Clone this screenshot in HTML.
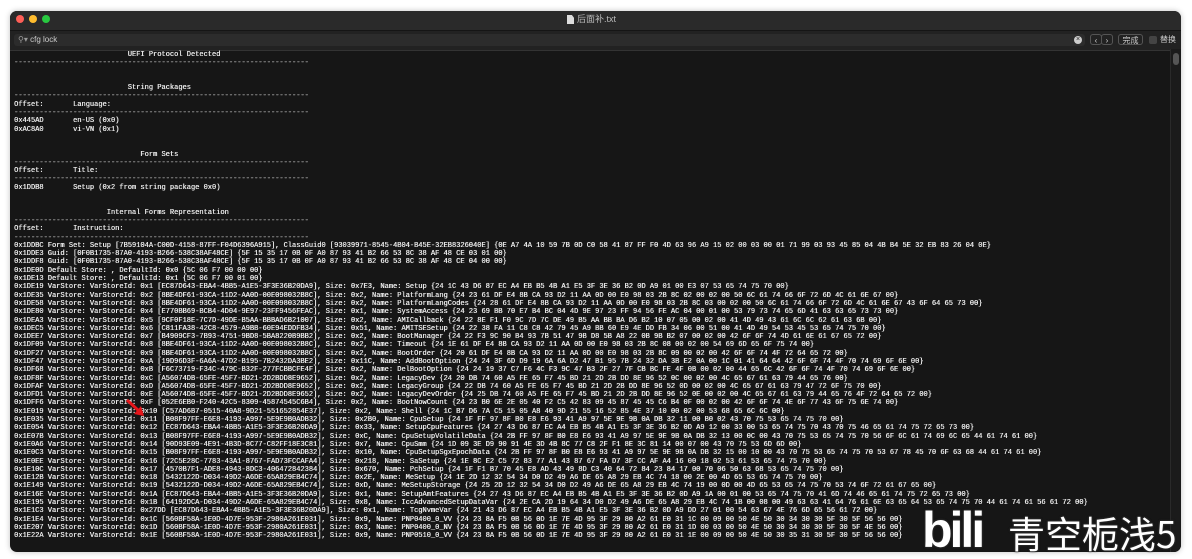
<!DOCTYPE html>
<html><head><meta charset="utf-8"><style>
html,body{margin:0;padding:0;width:1192px;height:559px;background:#fff;overflow:hidden;position:relative;font-family:"Liberation Sans","Noto Sans CJK SC",sans-serif}
.win{position:absolute;left:10px;top:11px;width:1171px;height:541px;background:#161616;border-radius:7px;overflow:hidden;box-shadow:0 0 6px rgba(0,0,0,.25)}
.tb{position:absolute;left:0;top:0;width:100%;height:19px;background:#2a2a2a}
.dot{position:absolute;top:4px;width:8px;height:8px;border-radius:50%}
.sb{position:absolute;left:0;top:19px;width:100%;height:19px;background:#222;border-top:1px solid #151515;border-bottom:1px solid #333}
.field{position:absolute;left:4px;top:3px;width:1071px;height:12px;background:#2c2c2c;border-radius:3px;color:#ccc;font-size:8px;line-height:12px}
.btn{position:absolute;top:3px;height:11px;border:1px solid #555;border-radius:3px;color:#ccc;font-size:8px;line-height:11px;text-align:center;box-sizing:border-box}
pre{position:absolute;left:4px;top:40px;margin:0;font-family:"Liberation Mono",monospace;font-size:7.03px;line-height:8.29px;color:#e8e8e8;white-space:pre;text-shadow:0.3px 0 0 #e8e8e8}
.d{color:#bbb}
.scr{position:absolute;left:1160px;top:38px;width:11px;height:503px;background:#1b1b1b;border-left:1px solid #2a2a2a}
.wm{position:absolute;color:#fff;text-shadow:0 0 2px #333,0 0 2px #333}
</style></head><body>
<div class="win">
 <div class="tb">
  <div class="dot" style="left:6px;background:#fe5f57"></div>
  <div class="dot" style="left:19px;background:#febc2e"></div>
  <div class="dot" style="left:32px;background:#28c840"></div>
  <div style="position:absolute;left:557px;top:4px;width:7px;height:9px;background:#ddd;clip-path:polygon(0 0,70% 0,100% 30%,100% 100%,0 100%)"></div>
  <div style="position:absolute;left:567px;top:2px;color:#bbb;font-size:9px;line-height:13px">后面补.txt</div>
 </div>
 <div class="sb">
  <div class="field"><span style="margin-left:4px;color:#999">⚲▾</span> <span>cfg lock</span>
   <div style="position:absolute;right:3px;top:2px;width:8px;height:8px;border-radius:50%;background:#ccc;color:#222;font-size:7px;line-height:8px;text-align:center">×</div></div>
  <div class="btn" style="left:1080px;width:12px">‹</div>
  <div class="btn" style="left:1091px;width:12px">›</div>
  <div class="btn" style="left:1108px;width:25px">完成</div>
  <div style="position:absolute;left:1139px;top:5px;width:8px;height:8px;background:#444;border-radius:2px"></div>
  <div style="position:absolute;left:1150px;top:3px;color:#ccc;font-size:8px;line-height:12px">替换</div>
 </div>
<pre>                           UEFI Protocol Detected
<span class="d">----------------------------------------------------------------------</span>


                           String Packages
<span class="d">----------------------------------------------------------------------</span>
Offset:       Language:
<span class="d">----------------------------------------------------------------------</span>
0x445AD       en-US (0x0)
0xAC8A0       vi-VN (0x1)


                              Form Sets
<span class="d">----------------------------------------------------------------------</span>
Offset:       Title:
<span class="d">----------------------------------------------------------------------</span>
0x1DDB8       Setup (0x2 from string package 0x0)


                      Internal Forms Representation
<span class="d">----------------------------------------------------------------------</span>
Offset:       Instruction:
<span class="d">----------------------------------------------------------------------</span>
0x1DDBC Form Set: Setup [7B59104A-C00D-4158-87FF-F04D6396A915], ClassGuid0 [93039971-8545-4B04-B45E-32EB8326040E] {0E A7 4A 10 59 7B 0D C0 58 41 87 FF F0 4D 63 96 A9 15 02 00 03 00 01 71 99 03 93 45 85 04 4B B4 5E 32 EB 83 26 04 0E}
0x1DDE3 Guid: [0F0B1735-87A0-4193-B266-538C38AF48CE] {5F 15 35 17 0B 0F A0 87 93 41 B2 66 53 8C 38 AF 48 CE 03 01 00}
0x1DDF8 Guid: [0F0B1735-87A0-4193-B266-538C38AF48CE] {5F 15 35 17 0B 0F A0 87 93 41 B2 66 53 8C 38 AF 48 CE 04 00 00}
0x1DE0D Default Store: , DefaultId: 0x0 {5C 06 F7 00 00 00}
0x1DE13 Default Store: , DefaultId: 0x1 {5C 06 F7 00 01 00}
0x1DE19 VarStore: VarStoreId: 0x1 [EC87D643-EBA4-4BB5-A1E5-3F3E36B20DA9], Size: 0x7E3, Name: Setup {24 1C 43 D6 87 EC A4 EB B5 4B A1 E5 3F 3E 36 B2 0D A9 01 00 E3 07 53 65 74 75 70 00}
0x1DE35 VarStore: VarStoreId: 0x2 [8BE4DF61-93CA-11D2-AA0D-00E098032B8C], Size: 0x2, Name: PlatformLang {24 23 61 DF E4 8B CA 93 D2 11 AA 0D 00 E0 98 03 2B 8C 02 00 02 00 50 6C 61 74 66 6F 72 6D 4C 61 6E 67 00}
0x1DE58 VarStore: VarStoreId: 0x3 [8BE4DF61-93CA-11D2-AA0D-00E098032B8C], Size: 0x2, Name: PlatformLangCodes {24 28 61 DF E4 8B CA 93 D2 11 AA 0D 00 E0 98 03 2B 8C 03 00 02 00 50 6C 61 74 66 6F 72 6D 4C 61 6E 67 43 6F 64 65 73 00}
0x1DE80 VarStore: VarStoreId: 0x4 [E770BB69-BCB4-4D04-9E97-23FF9456FEAC], Size: 0x1, Name: SystemAccess {24 23 69 BB 70 E7 B4 BC 04 4D 9E 97 23 FF 94 56 FE AC 04 00 01 00 53 79 73 74 65 6D 41 63 63 65 73 73 00}
0x1DEA3 VarStore: VarStoreId: 0x5 [9CF0F18E-7C7D-49DE-B5AA-BBBAD6B21007], Size: 0x2, Name: AMICallback {24 22 8E F1 F0 9C 7D 7C DE 49 B5 AA BB BA D6 B2 10 07 05 00 02 00 41 4D 49 43 61 6C 6C 62 61 63 6B 00}
0x1DEC5 VarStore: VarStoreId: 0x6 [C811FA38-42C8-4579-A9BB-60E94EDDFB34], Size: 0x51, Name: AMITSESetup {24 22 38 FA 11 C8 C8 42 79 45 A9 BB 60 E9 4E DD FB 34 06 00 51 00 41 4D 49 54 53 45 53 65 74 75 70 00}
0x1DEE7 VarStore: VarStoreId: 0x7 [B4909CF3-7B93-4751-9BD8-5BA8220B9BB2], Size: 0x2, Name: BootManager {24 22 F3 9C 90 B4 93 7B 51 47 9B D8 5B A8 22 0B 9B B2 07 00 02 00 42 6F 6F 74 4D 61 6E 61 67 65 72 00}
0x1DF09 VarStore: VarStoreId: 0x8 [8BE4DF61-93CA-11D2-AA0D-00E098032B8C], Size: 0x2, Name: Timeout {24 1E 61 DF E4 8B CA 93 D2 11 AA 0D 00 E0 98 03 2B 8C 08 00 02 00 54 69 6D 65 6F 75 74 00}
0x1DF27 VarStore: VarStoreId: 0x9 [8BE4DF61-93CA-11D2-AA0D-00E098032B8C], Size: 0x2, Name: BootOrder {24 20 61 DF E4 8B CA 93 D2 11 AA 0D 00 E0 98 03 2B 8C 09 00 02 00 42 6F 6F 74 4F 72 64 65 72 00}
0x1DF47 VarStore: VarStoreId: 0xA [19D96D3F-6A6A-47D2-B195-7B2432DA3BE2], Size: 0x11C, Name: AddBootOption {24 24 3F 6D D9 19 6A 6A D2 47 B1 95 7B 24 32 DA 3B E2 0A 00 1C 01 41 64 64 42 6F 6F 74 4F 70 74 69 6F 6E 00}
0x1DF68 VarStore: VarStoreId: 0xB [F6C73719-F34C-479C-B32F-277FCBBCFE4F], Size: 0x2, Name: DelBootOption {24 24 19 37 C7 F6 4C F3 9C 47 B3 2F 27 7F CB BC FE 4F 0B 00 02 00 44 65 6C 42 6F 6F 74 4F 70 74 69 6F 6E 00}
0x1DF8F VarStore: VarStoreId: 0xC [A56074DB-65FE-45F7-BD21-2D2BDD8E9652], Size: 0x2, Name: LegacyDev {24 20 DB 74 60 A5 FE 65 F7 45 BD 21 2D 2B DD 8E 96 52 0C 00 02 00 4C 65 67 61 63 79 44 65 76 00}
0x1DFAF VarStore: VarStoreId: 0xD [A56074DB-65FE-45F7-BD21-2D2BDD8E9652], Size: 0x2, Name: LegacyGroup {24 22 DB 74 60 A5 FE 65 F7 45 BD 21 2D 2B DD 8E 96 52 0D 00 02 00 4C 65 67 61 63 79 47 72 6F 75 70 00}
0x1DFD1 VarStore: VarStoreId: 0xE [A56074DB-65FE-45F7-BD21-2D2BDD8E9652], Size: 0x2, Name: LegacyDevOrder {24 25 DB 74 60 A5 FE 65 F7 45 BD 21 2D 2B DD 8E 96 52 0E 00 02 00 4C 65 67 61 63 79 44 65 76 4F 72 64 65 72 00}
0x1DFF6 VarStore: VarStoreId: 0xF [052E6EB0-F240-42C5-8309-45874545C6B4], Size: 0x2, Name: BootNowCount {24 23 B0 6E 2E 05 40 F2 C5 42 83 09 45 87 45 45 C6 B4 0F 00 02 00 42 6F 6F 74 4E 6F 77 43 6F 75 6E 74 00}
0x1E019 VarStore: VarStoreId: 0x10 [C57AD6B7-0515-40A8-9D21-551652854E37], Size: 0x2, Name: Shell {24 1C B7 D6 7A C5 15 05 A8 40 9D 21 55 16 52 85 4E 37 10 00 02 00 53 68 65 6C 6C 00}
0x1E035 VarStore: VarStoreId: 0x11 [B08F97FF-E6E8-4193-A997-5E9E9B0ADB32], Size: 0x2B0, Name: CpuSetup {24 1F FF 97 8F B0 E8 E6 93 41 A9 97 5E 9E 9B 0A DB 32 11 00 B0 02 43 70 75 53 65 74 75 70 00}
0x1E054 VarStore: VarStoreId: 0x12 [EC87D643-EBA4-4BB5-A1E5-3F3E36B20DA9], Size: 0x33, Name: SetupCpuFeatures {24 27 43 D6 87 EC A4 EB B5 4B A1 E5 3F 3E 36 B2 0D A9 12 00 33 00 53 65 74 75 70 43 70 75 46 65 61 74 75 72 65 73 00}
0x1E07B VarStore: VarStoreId: 0x13 [B08F97FF-E6E8-4193-A997-5E9E9B0ADB32], Size: 0xC, Name: CpuSetupVolatileData {24 2B FF 97 8F B0 E8 E6 93 41 A9 97 5E 9E 9B 0A DB 32 13 00 0C 00 43 70 75 53 65 74 75 70 56 6F 6C 61 74 69 6C 65 44 61 74 61 00}
0x1E0A6 VarStore: VarStoreId: 0x14 [90D93E09-4E91-4B3D-8C77-C82FF18E3C81], Size: 0x7, Name: CpuSmm {24 1D 09 3E D9 90 91 4E 3D 4B 8C 77 C8 2F F1 8E 3C 81 14 00 07 00 43 70 75 53 6D 6D 00}
0x1E0C3 VarStore: VarStoreId: 0x15 [B08F97FF-E6E8-4193-A997-5E9E9B0ADB32], Size: 0x10, Name: CpuSetupSgxEpochData {24 2B FF 97 8F B0 E8 E6 93 41 A9 97 5E 9E 9B 0A DB 32 15 00 10 00 43 70 75 53 65 74 75 70 53 67 78 45 70 6F 63 68 44 61 74 61 00}
0x1E0EE VarStore: VarStoreId: 0x16 [72C5E28C-7783-43A1-8767-FAD73FCCAFA4], Size: 0x218, Name: SaSetup {24 1E 8C E2 C5 72 83 77 A1 43 87 67 FA D7 3F CC AF A4 16 00 18 02 53 61 53 65 74 75 70 00}
0x1E10C VarStore: VarStoreId: 0x17 [4570B7F1-ADE8-4943-8DC3-406472842384], Size: 0x670, Name: PchSetup {24 1F F1 B7 70 45 E8 AD 43 49 8D C3 40 64 72 84 23 84 17 00 70 06 50 63 68 53 65 74 75 70 00}
0x1E12B VarStore: VarStoreId: 0x18 [5432122D-D034-49D2-A6DE-65A829EB4C74], Size: 0x2E, Name: MeSetup {24 1E 2D 12 32 54 34 D0 D2 49 A6 DE 65 A8 29 EB 4C 74 18 00 2E 00 4D 65 53 65 74 75 70 00}
0x1E149 VarStore: VarStoreId: 0x19 [5432122D-D034-49D2-A6DE-65A829EB4C74], Size: 0xD, Name: MeSetupStorage {24 25 2D 12 32 54 34 D0 D2 49 A6 DE 65 A8 29 EB 4C 74 19 00 0D 00 4D 65 53 65 74 75 70 53 74 6F 72 61 67 65 00}
0x1E16E VarStore: VarStoreId: 0x1A [EC87D643-EBA4-4BB5-A1E5-3F3E36B20DA9], Size: 0x1, Name: SetupAmtFeatures {24 27 43 D6 87 EC A4 EB B5 4B A1 E5 3F 3E 36 B2 0D A9 1A 00 01 00 53 65 74 75 70 41 6D 74 46 65 61 74 75 72 65 73 00}
0x1E195 VarStore: VarStoreId: 0x1B [64192DCA-D034-49D2-A6DE-65A829EB4C74], Size: 0x8, Name: IccAdvancedSetupDataVar {24 2E CA 2D 19 64 34 D0 D2 49 A6 DE 65 A8 29 EB 4C 74 1B 00 08 00 49 63 63 41 64 76 61 6E 63 65 64 53 65 74 75 70 44 61 74 61 56 61 72 00}
0x1E1C3 VarStore: VarStoreId: 0x27DD [EC87D643-EBA4-4BB5-A1E5-3F3E36B20DA9], Size: 0x1, Name: TcgNvmeVar {24 21 43 D6 87 EC A4 EB B5 4B A1 E5 3F 3E 36 B2 0D A9 DD 27 01 00 54 63 67 4E 76 6D 65 56 61 72 00}
0x1E1E4 VarStore: VarStoreId: 0x1C [560BF58A-1E0D-4D7E-953F-2980A261E031], Size: 0x9, Name: PNP0400_0_VV {24 23 8A F5 0B 56 0D 1E 7E 4D 95 3F 29 80 A2 61 E0 31 1C 00 09 00 50 4E 50 30 34 30 30 5F 30 5F 56 56 00}
0x1E207 VarStore: VarStoreId: 0x1D [560BF58A-1E0D-4D7E-953F-2980A261E031], Size: 0x3, Name: PNP0400_0_NV {24 23 8A F5 0B 56 0D 1E 7E 4D 95 3F 29 80 A2 61 E0 31 1D 00 03 00 50 4E 50 30 34 30 30 5F 30 5F 4E 56 00}
0x1E22A VarStore: VarStoreId: 0x1E [560BF58A-1E0D-4D7E-953F-2980A261E031], Size: 0x9, Name: PNP0510_0_VV {24 23 8A F5 0B 56 0D 1E 7E 4D 95 3F 29 80 A2 61 E0 31 1E 00 09 00 50 4E 50 30 35 31 30 5F 30 5F 56 56 00}</pre>
 <div class="scr"><div style="position:absolute;left:2px;top:4px;width:6px;height:12px;background:#555;border-radius:3px"></div></div>
</div>
<svg style="position:absolute;left:120px;top:395px" width="30" height="25"><path d="M7 5 L19 16" stroke="#e5161b" stroke-width="3"/><path d="M14 19 L24 21 L21 11 Z" fill="#e5161b"/></svg>
<div class="wm" style="left:922px;top:500px;font-size:50px;font-weight:bold;font-family:'Liberation Sans',sans-serif;letter-spacing:-3px;line-height:60px">bili</div>
<div class="wm" style="left:1008px;top:507px;font-size:37px;line-height:50px;font-family:'Noto Sans CJK SC',sans-serif">青空栀浅5</div>
</body></html>
